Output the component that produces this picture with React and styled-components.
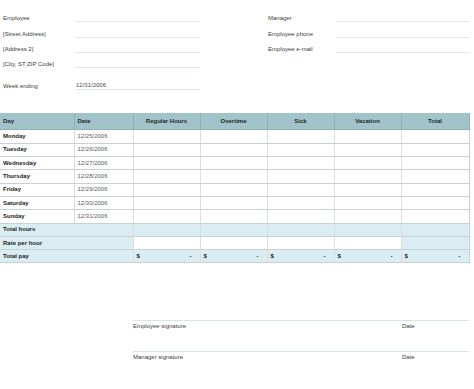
import React from 'react';
import styled, { createGlobalStyle } from 'styled-components';

const GlobalStyle = createGlobalStyle`
  body {
    margin: 0;
    background: #ffffff;
    font-family: 'Liberation Sans', Arial, sans-serif;
    color: #333;
  }
`;

const Page = styled.div`
  width: 474px;
  height: 389px;
  padding-top: 7px;
  box-sizing: border-box;
  overflow: hidden;
`;

const InfoArea = styled.div`
  display: flex;
`;

const InfoBlock = styled.div`
  display: flex;
  flex-direction: column;
  width: ${(p) => p.$width}px;
  padding-left: ${(p) => p.$pad}px;
  box-sizing: border-box;
`;

const FieldRow = styled.div`
  display: grid;
  grid-template-columns: ${(p) => p.$labelW}px ${(p) => p.$lineW}px;
  height: 15.3px;
  margin-top: ${(p) => p.$gap || 0}px;
  align-items: end;
  font-size: 6px;
  line-height: 7px;
`;

const Label = styled.span`
  color: #3c3c3c;
  white-space: nowrap;
`;

const LineValue = styled.span`
  border-bottom: 1px solid #dbe6e8;
  height: 9px;
  color: #4a4a4a;
  box-sizing: border-box;
  padding-top: 1px;
`;

const Sheet = styled.table`
  margin-top: 23px;
  border-collapse: collapse;
  table-layout: fixed;
  width: 469px;
  font-size: 6px;
  line-height: 7px;
`;

const HeadCell = styled.th`
  background: #a1c4ca;
  height: 16.5px;
  padding: 0 3px;
  font-weight: bold;
  color: #1e2a2c;
  text-align: ${(p) => (p.$left ? 'left' : 'center')};
  border-left: 1px solid #8eb1b7;
  border-bottom: 1px solid #8eb1b7;
  box-sizing: border-box;
  &:first-child {
    border-left: none;
  }
  &:last-child {
    border-right: 1px solid #8eb1b7;
  }
`;

const Cell = styled.td`
  height: 13.3px;
  padding: 0 3px;
  box-sizing: border-box;
  background: ${(p) => (p.$shade ? '#daedf2' : '#ffffff')};
  border-left: 1px solid #dadede;
  border-bottom: 1px solid #c9d1d3;
  font-weight: ${(p) => (p.$bold ? 'bold' : 'normal')};
  color: ${(p) => (p.$bold ? '#1b1b1b' : '#5a5a5a')};
  &:first-child {
    border-left: none;
  }
  &:last-child {
    border-right: 1px solid #c9d0d2;
  }
`;

const Money = styled.div`
  display: flex;
  justify-content: space-between;
  font-weight: bold;
  color: #1b1b1b;
  padding-right: 5px;
`;

const Signatures = styled.div`
  margin-top: 57px;
  margin-left: 133px;
  width: 336px;
`;

const SignRow = styled.div`
  display: grid;
  grid-template-columns: 269px 1fr;
  height: 31px;
  border-top: 1px solid #d6e4e7;
  font-size: 6px;
  line-height: 7px;
  color: #3c3c3c;
  padding-top: 2px;
  box-sizing: border-box;
`;

const days = [
  ['Monday', '12/25/2006'],
  ['Tuesday', '12/26/2006'],
  ['Wednesday', '12/27/2006'],
  ['Thursday', '12/28/2006'],
  ['Friday', '12/29/2006'],
  ['Saturday', '12/30/2006'],
  ['Sunday', '12/31/2006'],
];

const widths = [74, 59, 67, 67, 67, 67, 68];
const heads = ['Day', 'Date', 'Regular Hours', 'Overtime', 'Sick', 'Vacation', 'Total'];

const App = () => {
  return (
    <Page>
      <GlobalStyle />
      <InfoArea>
        <InfoBlock $width={268} $pad={3}>
          <FieldRow $labelW={73} $lineW={124}>
            <Label>Employee</Label>
            <LineValue />
          </FieldRow>
          <FieldRow $labelW={73} $lineW={124}>
            <Label>[Street Address]</Label>
            <LineValue />
          </FieldRow>
          <FieldRow $labelW={73} $lineW={124}>
            <Label>[Address 2]</Label>
            <LineValue />
          </FieldRow>
          <FieldRow $labelW={73} $lineW={124}>
            <Label>[City, ST  ZIP Code]</Label>
            <LineValue />
          </FieldRow>
          <FieldRow $labelW={73} $lineW={124} $gap={7}>
            <Label>Week ending</Label>
            <LineValue>12/31/2006</LineValue>
          </FieldRow>
        </InfoBlock>
        <InfoBlock $width={206} $pad={0}>
          <FieldRow $labelW={68} $lineW={133}>
            <Label>Manager</Label>
            <LineValue />
          </FieldRow>
          <FieldRow $labelW={68} $lineW={133}>
            <Label>Employee phone</Label>
            <LineValue />
          </FieldRow>
          <FieldRow $labelW={68} $lineW={133}>
            <Label>Employee e-mail</Label>
            <LineValue />
          </FieldRow>
        </InfoBlock>
      </InfoArea>

      <Sheet>
        <colgroup>
          {widths.map((w, i) => (
            <col key={i} style={{ width: w }} />
          ))}
        </colgroup>
        <thead>
          <tr>
            {heads.map((h, i) => (
              <HeadCell key={h} $left={i < 2}>
                {h}
              </HeadCell>
            ))}
          </tr>
        </thead>
        <tbody>
          {days.map(([d, date]) => (
            <tr key={d}>
              <Cell $bold>{d}</Cell>
              <Cell>{date}</Cell>
              <Cell />
              <Cell />
              <Cell />
              <Cell />
              <Cell />
            </tr>
          ))}
          <tr>
            <Cell $bold $shade colSpan={2}>Total hours</Cell>
            <Cell $shade />
            <Cell $shade />
            <Cell $shade />
            <Cell $shade />
            <Cell $shade />
          </tr>
          <tr>
            <Cell $bold $shade colSpan={2}>Rate per hour</Cell>
            <Cell />
            <Cell />
            <Cell />
            <Cell />
            <Cell $shade />
          </tr>
          <tr>
            <Cell $bold $shade colSpan={2}>Total pay</Cell>
            {[0, 1, 2, 3, 4].map((i) => (
              <Cell key={i} $shade>
                <Money>
                  <span>$</span>
                  <span>-</span>
                </Money>
              </Cell>
            ))}
          </tr>
        </tbody>
      </Sheet>

      <Signatures>
        <SignRow>
          <span>Employee signature</span>
          <span>Date</span>
        </SignRow>
        <SignRow>
          <span>Manager signature</span>
          <span>Date</span>
        </SignRow>
      </Signatures>
    </Page>
  );
};

export default App;
